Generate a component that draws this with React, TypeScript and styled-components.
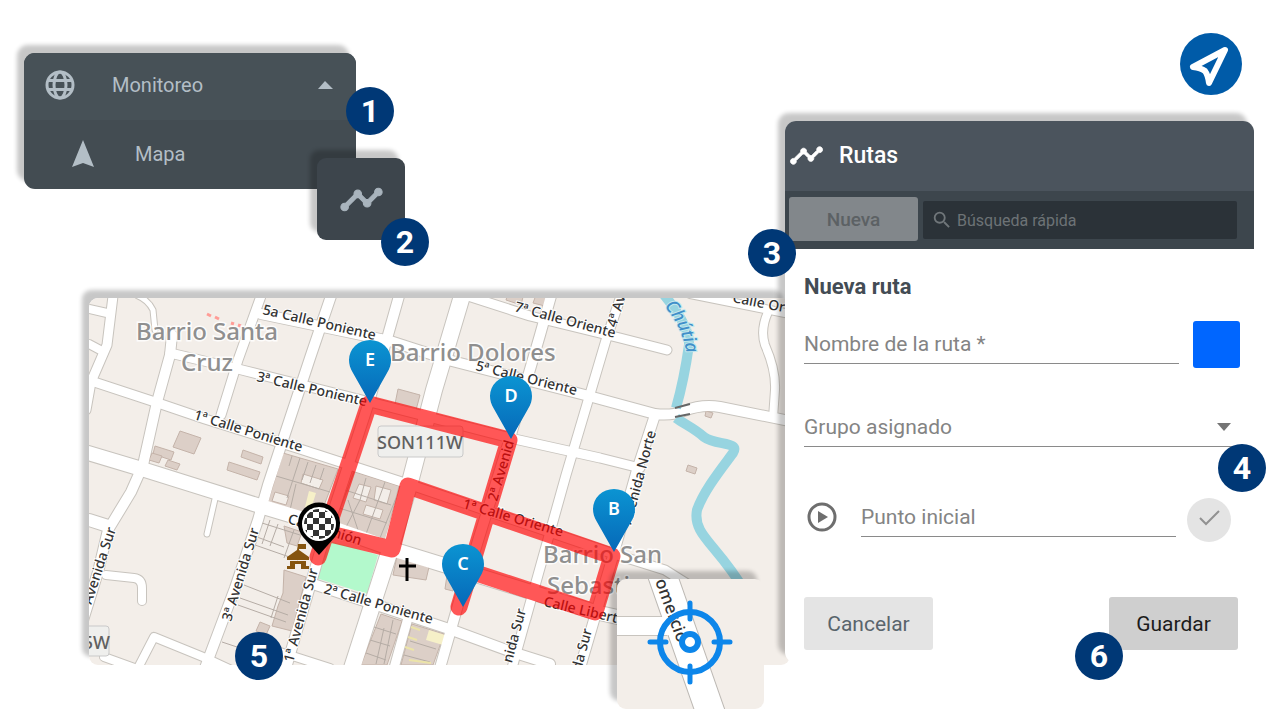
import React from "react";
import styled, { createGlobalStyle, css } from "styled-components";

const GlobalStyle = createGlobalStyle`
  *, *::before, *::after { box-sizing: border-box; }
  body {
    margin: 0;
    background: #fff;
    font-family: Roboto, "Liberation Sans", sans-serif;
    overflow-x: hidden;
  }
  button, input, select { font-family: inherit; }
`;

const castShadow = css`
  box-shadow: -7px -8px 4px rgba(0, 0, 0, 0.22);
`;

const Page = styled.main`
  display: grid;
  grid-template-columns: minmax(0, 1fr) 469px;
  padding-right: 26px;
  min-height: 100vh;
  align-items: start;
`;

const Left = styled.div`
  display: flex;
  flex-direction: column;
  padding-top: 53px;
`;

const Right = styled.div`
  position: relative;
  z-index: 2;
  display: flex;
  flex-direction: column;
  padding-top: 33px;
`;

/* Numbered step marker that sits over the edge of a card */
const Badge = styled.span<{ $top?: number; $left?: number; $right?: number; $bottom?: number }>`
  position: absolute;
  z-index: 3;
  top: ${(p) => (p.$top === undefined ? "auto" : `${p.$top}px`)};
  left: ${(p) => (p.$left === undefined ? "auto" : `${p.$left}px`)};
  right: ${(p) => (p.$right === undefined ? "auto" : `${p.$right}px`)};
  bottom: ${(p) => (p.$bottom === undefined ? "auto" : `${p.$bottom}px`)};
  width: 48px;
  height: 48px;
  border-radius: 50%;
  background: #003876;
  color: #fff;
  font-size: 32px;
  font-weight: 700;
  line-height: 48px;
  text-align: center;
`;

const MenuCard = styled.nav`
  ${castShadow}
  position: relative;
  width: 332px;
  margin: 0 0 109px 24px;
  border-radius: 11px;
  background: #434c52;
`;

const MenuButton = styled.button`
  display: flex;
  align-items: center;
  width: 100%;
  height: 67px;
  padding: 0 20px 4px;
  border: 0;
  border-radius: 11px 11px 0 0;
  background: #475157;
  color: #b3bec6;
  font-size: 20px;
  text-align: left;
  svg:first-child { margin-right: 36px; }
  svg:last-child { margin-left: auto; }
`;

const MenuLink = styled.a`
  display: flex;
  align-items: center;
  gap: 34px;
  height: 69px;
  padding: 0 0 2px 42px;
  color: #b3bec6;
  font-size: 20px;
  text-decoration: none;
`;

const RouteTool = styled.div`
  position: absolute;
  top: 105px;
  left: 293px;
`;

const RouteButton = styled.button`
  ${castShadow}
  display: grid;
  place-items: center;
  width: 88px;
  height: 82px;
  padding: 0;
  border: 0;
  border-radius: 9px;
  background: #3d454c;
  color: #a9b4bd;
`;

const MapCard = styled.section`
  ${castShadow}
  position: relative;
  z-index: 1;
  margin: 0 -5px 55px 89px;
  border-radius: 9px;
`;

const MapDrawing = styled.svg`
  display: block;
  width: 100%;
  height: 367px;
  border-radius: 9px;
  background: #f3eee9;
  font-family: "Noto Sans", sans-serif;
`;

const LocateButton = styled.button`
  ${castShadow}
  position: absolute;
  right: 26px;
  bottom: -44px;
  width: 147px;
  height: 130px;
  padding: 0;
  border: 0;
  border-radius: 9px;
  overflow: hidden;
  background: #f3eee9;
  font-family: "Noto Sans", sans-serif;
  svg { display: block; }
`;

const LogoBar = styled.header`
  display: flex;
  justify-content: flex-end;
  padding: 0 12px 26px 0;
  svg { display: block; }
`;

const Panel = styled.section`
  ${castShadow}
  border-radius: 11px;
  background: #fff;
`;

const PanelHeader = styled.div`
  display: flex;
  align-items: center;
  gap: 15px;
  height: 70px;
  padding: 0 0 2px 4px;
  border-radius: 11px 11px 0 0;
  background: #4b545d;
  color: #fff;
`;

const PanelTitle = styled.h1`
  margin: 0;
  font-size: 23px;
  font-weight: 500;
`;

const Toolbar = styled.div`
  position: relative;
  display: flex;
  align-items: flex-start;
  gap: 5px;
  height: 58px;
  padding: 6px 17px 0 4px;
  background: #3d464d;
`;

const NewButton = styled.button`
  width: 129px;
  height: 44px;
  border: 0;
  border-radius: 3px;
  background: #82878b;
  color: #5c6164;
  font-size: 19px;
  font-weight: 500;
`;

const SearchBox = styled.label`
  display: flex;
  flex: 1;
  align-items: center;
  gap: 4px;
  height: 38px;
  margin-top: 4px;
  padding: 0 8px;
  border-radius: 2px;
  background: #2b3238;
  color: #70767a;
`;

const SearchInput = styled.input`
  flex: 1;
  min-width: 0;
  padding: 0;
  border: 0;
  outline: 0;
  background: transparent;
  color: #d0d4d6;
  font-size: 16px;
  &::placeholder { color: #6d7376; opacity: 1; }
`;

const Form = styled.form`
  padding: 24px 14px 13px 19px;
`;

const FormTitle = styled.h2`
  margin: 0 0 20px;
  color: #434c54;
  font-size: 22px;
  font-weight: 700;
  line-height: 28px;
`;

const FieldRow = styled.div<{ $gap: number; $top?: boolean }>`
  position: relative;
  display: flex;
  align-items: ${(p) => (p.$top ? "flex-start" : "center")};
  gap: 14px;
  margin-bottom: ${(p) => p.$gap}px;
`;

const fieldLook = css`
  flex: 1;
  min-width: 0;
  height: 39px;
  padding: 0;
  border: 0;
  border-bottom: 1px solid #8a8a8a;
  border-radius: 0;
  outline: 0;
  background: transparent;
  color: #848484;
  font-size: 21px;
`;

const TextField = styled.input`
  ${fieldLook}
  &::placeholder { color: #848484; opacity: 1; }
`;

const SelectField = styled.select`
  ${fieldLook}
  appearance: none;
`;

const SelectCaret = styled.svg`
  position: absolute;
  top: 15px;
  right: 8px;
  pointer-events: none;
`;

const ColorSwatch = styled.button`
  width: 47px;
  height: 47px;
  border: 0;
  border-radius: 3px;
  background: #0066ff;
`;

const PointRow = styled(FieldRow)`
  gap: 11px;
  padding-right: 9px;
`;

const PlaySlot = styled.span`
  display: block;
  width: 46px;
  height: 38px;
  svg { display: block; }
`;

const ConfirmButton = styled.button`
  display: grid;
  place-items: center;
  width: 44px;
  height: 44px;
  padding: 0 0 4px;
  border: 0;
  border-radius: 50%;
  background: #e4e4e4;
  color: #919191;
`;

const Actions = styled.div`
  position: relative;
  display: flex;
  justify-content: space-between;
  padding-right: 2px;
`;

const ActionButton = styled.button<{ $primary?: boolean }>`
  width: 129px;
  height: 53px;
  border: 0;
  border-radius: 3px;
  background: ${(p) => (p.$primary ? "#cfcfcf" : "#e4e4e4")};
  color: ${(p) => (p.$primary ? "#1c1c1c" : "#59646c")};
  font-size: 21px;
`;

const Timeline = ({ size }: { size: number }) => (
  <svg width={size} height={size} viewBox="0 0 24 24" fill="currentColor" stroke="currentColor" strokeWidth=".6" aria-hidden="true">
    <path d="M23 8c0 1.1-.9 2-2 2-.18 0-.35-.02-.51-.07l-3.56 3.55c.05.16.07.34.07.52 0 1.1-.9 2-2 2s-2-.9-2-2c0-.18.02-.36.07-.52l-2.55-2.55c-.16.05-.34.07-.52.07s-.36-.02-.52-.07l-4.55 4.56c.05.16.07.33.07.51 0 1.1-.9 2-2 2s-2-.9-2-2 .9-2 2-2c.18 0 .35.02.51.07l4.56-4.55C8.02 9.36 8 9.18 8 9c0-1.1.9-2 2-2s2 .9 2 2c0 .18-.02.36-.07.52l2.55 2.55c.16-.05.34-.07.52-.07s.36.02.52.07l3.55-3.56C19.02 8.35 19 8.18 19 8c0-1.1.9-2 2-2s2 .9 2 2z" />
  </svg>
);

const Globe = () => (
  <svg width="32" height="32" viewBox="0 0 32 32" fill="none" stroke="currentColor" strokeWidth="3" aria-hidden="true">
    <circle cx="16" cy="16" r="13" />
    <ellipse cx="16" cy="16" rx="6" ry="13" />
    <path d="M4 11.5h24M4 20.5h24" />
  </svg>
);

/* Map street geometry: centre line and width of each road */
const roads: [string, number][] = [
  ["M89 309 L107 313", 8],
  ["M89 344 L104 352", 8],
  ["M113 296 L107 345 L91 382 L86 410", 9],
  ["M138 296 Q148 300 153 310 L155 330", 5],
  ["M172 335 L170 355 L157 402 L143 465 L131 492 L108 530 L98 572 L80 630", 10],
  ["M170 353 L238 369 L370 402 L510 438 L600 458 L640 468", 9],
  ["M88 380 L158 403 L205 419 L300 449 L408 484 L614 554 L665 570 L700 592", 9],
  ["M88 453 L145 470 L260 506 L330 527 L395 550 L460 570 L595 612 L640 622", 14],
  ["M261 296 L238 360 L221 415", 9],
  ["M261 314 L390 341 L452 361 L585 395 L655 414 Q672 416 684 411 Q702 404 720 407 L790 421", 10],
  ["M331 296 L310 358 L268 485 L258 520 L235 588 L205 668", 10],
  ["M399 296 L388 335 L369 402 L320 552 L286 668", 10],
  ["M462 296 L434 390 L410 482 L390 550 L352 668", 16],
  ["M468 296 L530 316 L620 338 L667 350", 9],
  ["M551 296 L540 335 L510 438 L458 605 L440 668", 10],
  ["M621 296 L606 340 L566 475 L545 550 L512 668", 9],
  ["M655 415 L637 470 L613 556 L594 620 L580 668", 10],
  ["M768 312 Q760 330 765 345 Q776 370 775 390 L773 418", 8],
  ["M690 294 L790 314", 8],
  ["M316 585 L452 630 L512 652 L550 664", 10],
  ["M215 499 L207 534", 5],
  ["M106 575 L134 578 Q142 579 142 588 L142 601", 8],
  ["M138 668 L154 637 L208 659 L240 674", 8],
  ["M89 520 L108 526", 12],
  ["M104 657 L140 670", 8],
  ["M280 652 L330 668", 8],
  ["M408 618 L394 668", 9],
];

const buildings = [
  "M180 431 l21 7 -7 16 -21 -7z",
  "M155 446 l19 6 -3 8 -18 -6z",
  "M152 453 l10 3 -3 7 -10 -3z M168 460 l12 4 -3 6 -12 -4z",
  "M243 450 l20 7 -2 7 -20 -7z M229 462 l31 10 -3 8 -30 -10z",
  "M283 453 L338 469 L318 521 L267 505 Z",
  "M352 471 L399 486 L385 541 L334 524 Z",
  "M398 389 l22 6 -4 15 -21 -6z",
  "M397 556 l32 11 -3 13 -33 -5z M448 568 l8 3 -3 20 -8 -2z",
  "M284 570 l22 7 -14 54 -20 -5 6 -20 5 -13z M260 622 l10 4 -4 9 -10 -4z",
  "M381 614 l21 7 -15 44 -26 0z M412 624 l32 10 -11 31 -32 0z",
  "M536 295 l12 3 -3 8 -12 -3z M508 293 l15 4 -2 8 -15 -5z",
  "M688 465 l9 3 -2 6 -9 -3z M706 411 l7 2 -2 5 -6 -2z",
  "M385 604 l5 2 -2 5 -5 -1z",
  "M284 526 l18 6 -5 14 -10 -3z",
];

const yards = [
  "M303 474 l20 6 -4 9 -18 -6z",
  "M275 492 l14 4 -3 9 -14 -4z",
  "M359 484 l12 3 -5 15 -13 -4z",
  "M376 486 l15 4 -4 14 -13 -4z",
  "M366 505 l17 5 -3 9 -17 -5z",
];

const lots =
  "M276 476 L330 492 M300 458 L287 498 M292 456 L289 466 M308 462 L302 480 M316 465 L310 483 M324 468 L320 480 M296 484 L290 510 M345 490 L391 505 M354 472 L334 524 M366 478 L360 500 L346 527 M339 508 L387 523 M385 482 L366 534 M396 498 L380 538 M348 500 L352 512 L358 530 M384 628 L376 664 M393 620 L384 664 M370 640 L390 646 M374 627 L396 634 M366 653 L386 660 M404 655 L430 662 M410 641 L436 649 M262 523 L300 535 M257 537 L284 547 M270 520 L262 544 M278 524 L270 546 M294 530 L284 558 M244 585 L290 603 M240 598 L288 615 M238 605 L286 622 M278 596 L271 618 M222 642 L240 648 M255 545 L298 560";

type LabelSpec = { t: string; x: number; y: number; r: number; end?: boolean };
const streetLabels: LabelSpec[] = [
  { t: "5a Calle Poniente", x: 262, y: 314, r: 13 },
  { t: "3ª Calle Poniente", x: 256, y: 381, r: 13 },
  { t: "1ª Calle Poniente", x: 193, y: 419, r: 17 },
  { t: "7ª Calle Oriente", x: 514, y: 311, r: 15 },
  { t: "5ª Calle Oriente", x: 475, y: 370, r: 14 },
  { t: "Calle Or", x: 732, y: 302, r: 11 },
  { t: "4ª Av", x: 616, y: 328, r: -73 },
  { t: "Avenida Norte", x: 656, y: 432, r: -75, end: true },
  { t: "2ª Avenid", x: 497, y: 502, r: -74 },
  { t: "1ª Calle Oriente", x: 462, y: 508, r: 16 },
  { t: "Calle Libert", x: 543, y: 606, r: 13 },
  { t: "Calle Unión", x: 287, y: 523, r: 17 },
  { t: "2ª Calle Poniente", x: 323, y: 593, r: 16 },
  { t: "Avenida Sur", x: 116, y: 529, r: -72, end: true },
  { t: "3ª Avenida Sur", x: 231, y: 622, r: -73 },
  { t: "1ª Avenida Sur", x: 293, y: 663, r: -75 },
  { t: "nida Sur", x: 526, y: 610, r: -75, end: true },
  { t: "da Sur", x: 592, y: 630, r: -75, end: true },
];

const Pin = ({ x, y, letter }: { x: number; y: number; letter: string }) => (
  <g transform={`translate(${x} ${y})`}>
    <path d="M0 0 L-17 -30 C-20 -35 -21 -39 -21 -43 A21 20 0 0 1 21 -43 C21 -39 20 -35 17 -30 Z" fill="url(#pinFill)" />
    <text x="0" y="-37" textAnchor="middle" fontSize="18" fontWeight="600" fill="#fff">{letter}</text>
  </g>
);

const RouteMap = () => (
  <MapDrawing viewBox="89 298 701 367" preserveAspectRatio="xMinYMin slice" role="img" aria-label="Mapa de la ruta">
    <defs>
      <linearGradient id="pinFill" x1="0" y1="0" x2="0" y2="1">
        <stop offset="0" stopColor="#0b94d2" />
        <stop offset="1" stopColor="#0668b8" />
      </linearGradient>
      <pattern id="checks" x="307" y="512" width="12" height="12" patternUnits="userSpaceOnUse">
        <rect width="12" height="12" fill="#fff" />
        <path d="M0 0h6v6h-6z M6 6h6v6h-6z" fill="#333" />
      </pattern>
      <path id="riverName" d="M664 306 Q684 328 688 362" />
    </defs>

    <path d="M320 538 L378 555 L367 594 L316 578 Z" fill="#b3f9cc" />
    <g fill="none" stroke="#c8c4be" strokeLinecap="round" strokeLinejoin="round">
      {roads.map(([d, w]) => <path key={d} d={d} strokeWidth={w + 2} />)}
    </g>
    <g fill="#dccfc7" stroke="#c4b3a9" strokeWidth="1">
      {buildings.map((d) => <path key={d} d={d} />)}
    </g>
    <g fill="#f3eee9" stroke="#c4b3a9" strokeWidth="1">
      {yards.map((d) => <path key={d} d={d} />)}
    </g>
    <path d={lots} fill="none" stroke="#b5aca5" strokeWidth="1" />
    <path d="M309 491 l7 2 -5 16 -6 -2z M429 630 l16 5 -2 10 -17 -5z" fill="#f6f0c8" />
    <path d="M411 627 l9 3 M408 637 l9 3 M405 647 l9 3 M409 660 l22 3" stroke="#ece4a8" strokeWidth="2" />
    <g fill="none" stroke="#fff" strokeLinecap="round" strokeLinejoin="round">
      {roads.map(([d, w]) => <path key={d} d={d} strokeWidth={w} />)}
    </g>
    <path
      d="M660 290 Q690 325 689 345 Q684 380 676 408"
      fill="none" stroke="#97d4e0" strokeWidth="10"
    />
    <path
      d="M676 418 C684 424 694 428 704 437 C716 446 740 441 733 453 C722 468 704 490 697 510 C692 535 718 545 744 590"
      fill="none" stroke="#97d4e0" strokeWidth="10"
    />
    <path d="M675 408 L690 404 M675 417 L690 414" stroke="#666" strokeWidth="2" />
    <path d="M207 314 l4 2 M215 317 l4 2 M231 323 l3 1 M238 325 l3 1" stroke="#ff9c96" strokeWidth="3" />

    <g fontSize="24" fontWeight="500" fill="#8f8f8f" stroke="#fff" strokeWidth="3" paintOrder="stroke" strokeOpacity=".85">
      <text x="207" y="340" textAnchor="middle">Barrio Santa</text>
      <text x="207" y="371" textAnchor="middle">Cruz</text>
      <text x="390" y="361">Barrio Dolores</text>
      <text x="543" y="563">Barrio San</text>
      <text x="547" y="594">Sebasti</text>
    </g>
    <g fontSize="14" fontWeight="500" fill="#333" stroke="#fff" strokeWidth="2" paintOrder="stroke">
      {streetLabels.map((l) => (
        <text key={`${l.t}${l.x}`} textAnchor={l.end ? "end" : "start"} transform={`translate(${l.x} ${l.y}) rotate(${l.r})`}>{l.t}</text>
      ))}
    </g>
    <text fontSize="18" fontStyle="italic" fontWeight="500" fill="#3f8fc9" stroke="#c4e8ee" strokeWidth="2" paintOrder="stroke">
      <textPath href="#riverName">Chútia</textPath>
    </text>

    <g fill="#efefed" stroke="#c9c9c9" strokeWidth="1">
      <rect x="378" y="426" width="85" height="31" rx="3" />
      <rect x="60" y="626" width="49" height="30" rx="3" />
    </g>
    <g fontSize="18" fontWeight="500" fill="#606060">
      <text x="420" y="449" textAnchor="middle">SON111W</text>
      <text x="110" y="649" textAnchor="end">5W</text>
    </g>

    <g fill="none" stroke="#f00" strokeWidth="17" strokeLinecap="round" strokeLinejoin="round" opacity=".66">
      <path d="M318 557 L369 404 L509 440 L459 607 L470 571 L595 612 L612 556 L408 486 L392 549 L322 532" />
    </g>

    <g fill="#85540f">
      <path d="M298 544 h8 v5 h-7 v1 l10 7 v3 h-22 v-3 l10 -7z" />
      <path d="M290 561 h16 v5 h3 v3 h-8 v-5 h-6 v5 h-8 v-3 h3z" />
    </g>
    <path d="M407 558 v23 M399 566 h17" stroke="#000" strokeWidth="3" />

    <Pin x={370} y={403} letter="E" />
    <Pin x={511} y={439} letter="D" />
    <Pin x={614} y={552} letter="B" />
    <Pin x={463} y={607} letter="C" />
    <path d="M319 555 L303 537 A21 21 0 1 1 335 537 Z" fill="#000" />
    <circle cx="319" cy="524" r="16" fill="url(#checks)" stroke="#fff" strokeWidth="2" />
  </MapDrawing>
);

const LocateDrawing = () => (
  <svg width="147" height="130" viewBox="0 0 147 130" aria-hidden="true">
    <path d="M-5 47 H50" stroke="#c8c4be" strokeWidth="20" />
    <path d="M45 -5 L94 135" stroke="#bcb8b3" strokeWidth="30" />
    <path d="M-5 47 H56" stroke="#fff" strokeWidth="18" />
    <path d="M45 -5 L94 135" stroke="#fff" strokeWidth="28" />
    <text fontSize="17" fontWeight="500" fill="#333" transform="translate(38 2) rotate(70)">omercio</text>
    <g fill="none" stroke="#0d86ea" strokeWidth="6" strokeLinecap="round">
      <circle cx="73" cy="63" r="30" />
      <circle cx="73" cy="63" r="8" fill="#fff" />
      <path d="M73 24 v16 M73 87 v16 M33 63 h16 M97 63 h16" strokeWidth="5" />
    </g>
  </svg>
);

export default function App() {
  return (
    <>
      <GlobalStyle />
      <Page>
        <Left>
          <MenuCard aria-label="Menú">
            <MenuButton type="button" aria-expanded="true">
              <Globe />
              Monitoreo
              <svg width="22" height="10" viewBox="0 0 22 10" fill="currentColor" aria-hidden="true">
                <path d="M4 9 L11 1 L19 9z" />
              </svg>
            </MenuButton>
            <MenuLink href="#mapa">
              <svg width="35" height="30" viewBox="0 0 35 30" fill="currentColor" aria-hidden="true">
                <path d="M17 1 L28 28 L17 24 L6 28z" />
              </svg>
              Mapa
            </MenuLink>
            <Badge $top={34} $right={-38}>1</Badge>
            <RouteTool>
              <RouteButton type="button" aria-label="Rutas">
                <Timeline size={45} />
              </RouteButton>
              <Badge $top={60} $left={64}>2</Badge>
            </RouteTool>
          </MenuCard>
          <MapCard>
            <RouteMap />
            <LocateButton type="button" aria-label="Mi ubicación">
              <LocateDrawing />
            </LocateButton>
            <Badge $left={146} $bottom={-15}>5</Badge>
          </MapCard>
        </Left>

        <Right>
          <LogoBar>
            <svg width="62" height="62" viewBox="0 0 62 62" role="img" aria-label="Navegación">
              <circle cx="31" cy="31" r="31" fill="#005ba8" />
              <path
                d="M45 17 L13 34 Q21 35 25 38 Q28 42 29 50 Z"
                fill="none" stroke="#fff" strokeWidth="6" strokeLinejoin="round"
              />
            </svg>
          </LogoBar>
          <Panel>
            <PanelHeader>
              <Timeline size={35} />
              <PanelTitle>Rutas</PanelTitle>
            </PanelHeader>
            <Toolbar>
              <NewButton type="button">Nueva</NewButton>
              <SearchBox>
                <svg width="22" height="22" viewBox="0 0 24 24" fill="currentColor" aria-hidden="true">
                  <path d="M15.5 14h-.79l-.28-.27A6.47 6.47 0 0 0 16 9.5 6.5 6.5 0 1 0 9.5 16c1.61 0 3.09-.59 4.23-1.57l.27.28v.79l5 4.99L20.49 19l-4.99-5zm-6 0C7.01 14 5 11.99 5 9.5S7.01 5 9.5 5 14 7.01 14 9.5 11.99 14 9.5 14z" />
                </svg>
                <SearchInput type="search" placeholder="Búsqueda rápida" aria-label="Búsqueda rápida" />
              </SearchBox>
              <Badge $left={-37} $bottom={-28}>3</Badge>
            </Toolbar>
            <Form onSubmit={(e) => e.preventDefault()}>
              <FormTitle>Nueva ruta</FormTitle>
              <FieldRow $gap={40}>
                <TextField type="text" placeholder="Nombre de la ruta *" aria-label="Nombre de la ruta" required />
                <ColorSwatch type="button" aria-label="Color de la ruta" />
              </FieldRow>
              <FieldRow $gap={51}>
                <SelectField aria-label="Grupo asignado" defaultValue="">
                  <option value="">Grupo asignado</option>
                </SelectField>
                <SelectCaret width="16" height="9" viewBox="0 0 16 9" aria-hidden="true">
                  <path d="M1 0 H15 L8 8z" fill="#757575" />
                </SelectCaret>
                <Badge $top={36} $right={-26}>4</Badge>
              </FieldRow>
              <PointRow $gap={55} $top>
                <PlaySlot>
                  <svg width="36" height="38" viewBox="0 0 36 38" aria-hidden="true">
                    <circle cx="18" cy="19" r="13" fill="none" stroke="#6e6e6e" strokeWidth="3" />
                    <path d="M14 13 L24 19 L14 25z" fill="#6e6e6e" />
                  </svg>
                </PlaySlot>
                <TextField type="text" placeholder="Punto inicial" aria-label="Punto inicial" />
                <ConfirmButton type="button" aria-label="Confirmar punto">
                  <svg width="26" height="26" viewBox="0 0 26 26" fill="none" stroke="currentColor" strokeWidth="2" aria-hidden="true">
                    <path d="M4 13 L10 19 L23 6" />
                  </svg>
                </ConfirmButton>
              </PointRow>
              <Actions>
                <ActionButton type="button">Cancelar</ActionButton>
                <ActionButton type="submit" $primary>Guardar</ActionButton>
                <Badge $right={117} $bottom={-30}>6</Badge>
              </Actions>
            </Form>
          </Panel>
        </Right>
      </Page>
    </>
  );
}
